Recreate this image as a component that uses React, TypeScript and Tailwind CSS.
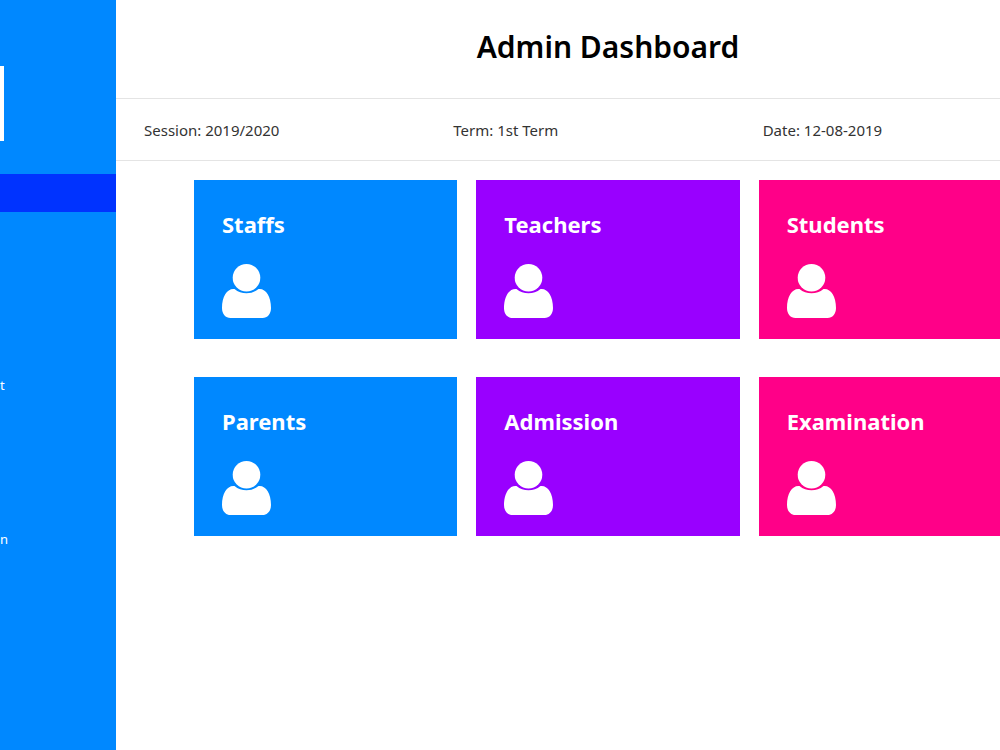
import { clsx } from "clsx";

const cards = [
    { title: "Staffs", color: "bg-[#0088ff]" },
    { title: "Teachers", color: "bg-[#9900ff]" },
    { title: "Students", color: "bg-[#ff0088]" },
    { title: "Parents", color: "bg-[#0088ff]" },
    { title: "Admission", color: "bg-[#9900ff]" },
    { title: "Examination", color: "bg-[#ff0088]" },
];

const info = ["Session: 2019/2020", "Term: 1st Term", "Date: 12-08-2019"];

export default function App() {
    return (
        <div className="flex min-h-screen overflow-hidden bg-white font-['Noto_Sans',sans-serif]">
            <Sidebar />

            {/* Main runs past the right edge of the window */}
            <main className="flex-1 min-w-0 -mr-[100px]">
                <header className="h-[99px] flex items-center justify-center pb-1 border-b border-[#e4e4e4]">
                    <h1 className="text-[30px] leading-9 font-semibold text-black">Admin Dashboard</h1>
                </header>

                <div className="h-[62px] grid grid-cols-3 items-center px-7 border-b border-[#e4e4e4]">
                    {info.map(item => (
                        <p key={item} className="text-[15px] leading-6 text-[#333333]">{item}</p>
                    ))}
                </div>

                <div className="grid grid-cols-3 gap-x-[19px] gap-y-[38px] px-[78px] pt-[19px]">
                    {cards.map(card => (
                        <Card key={card.title} title={card.title} color={card.color} />
                    ))}
                </div>
            </main>
        </div>
    );
}

function Sidebar() {
    return (
        <aside className="w-[116px] shrink-0 bg-[#0088ff]">
            <div className="h-[174px] pt-[66px]">
                <div className="w-1 h-[75px] bg-white" />
            </div>
            <nav className="text-[13px] leading-[38px] text-white">
                <a href="#" aria-label="Dashboard" className="block h-[38px] bg-[#0033ff]" />
                <a href="#" className="block h-[38px] mt-[154px]">t</a>
                <a href="#" className="block h-[38px] mt-[116px]">n</a>
            </nav>
        </aside>
    );
}

function Card({ title, color }: { title: string; color: string }) {
    return (
        <section className={clsx("px-7 pt-7 pb-[21px]", color)}>
            <h2 className="text-[22px] leading-8 font-bold text-white">{title}</h2>
            <UserIcon />
        </section>
    );
}

function UserIcon() {
    return (
        <svg className="mt-6 w-[49px] h-[54px] text-white" viewBox="0 0 49 54" fill="currentColor" aria-hidden="true">
            <circle cx="24.5" cy="13.8" r="13.8" />
            <path d="M12.5 25 C16 28 20 29.300 24.500 29.300 C29 29.300 33 28 36.500 25 C43.500 24 49 32 49 44 C49 50 45.500 54 40.500 54 H8.500 C3.500 54 0 50 0 44 C0 32 5.500 24 12.500 25 Z" />
        </svg>
    );
}
